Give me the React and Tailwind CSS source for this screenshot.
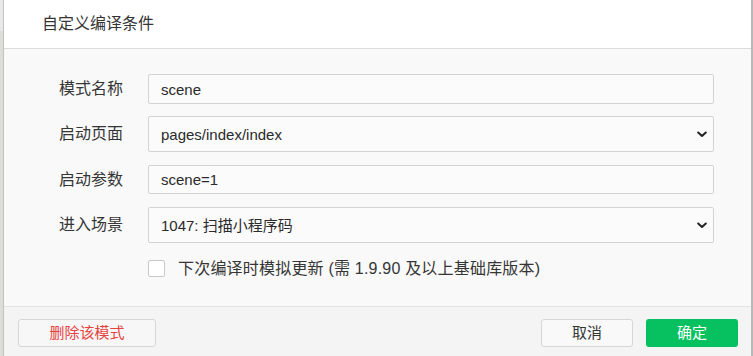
import React from "react";

const font = { fontFamily: '"Liberation Sans", "Noto Sans CJK SC", sans-serif' };

function Chevron() {
  return (
    <svg width="10" height="7" viewBox="0 0 10 7" className="shrink-0">
      <path d="M1.2 1.5 L5 5 L8.8 1.5" fill="none" stroke="#222" strokeWidth="2" strokeLinecap="round" strokeLinejoin="round" />
    </svg>
  );
}

function Row({ label, value, select, h, mt }) {
  return (
    <div className={`flex items-center ${mt}`}>
      <div className="w-[119px] shrink-0 text-right text-[16px] text-[#353535] leading-none">{label}</div>
      <div
        className={`ml-[25px] w-[566px] ${h} flex items-center justify-between rounded-[2px] border border-[#d3d3d3] bg-[#fbfbfb] pl-[12px] pr-[6px] text-[15px] text-[#2a2a2a]`}
      >
        <span className="leading-none">{value}</span>
        {select && <Chevron />}
      </div>
    </div>
  );
}

export default function App() {
  return (
    <div className="flex h-[356px] w-[753px] overflow-hidden" style={font}>
      {/* window edge */}
      <div className="flex w-[3px] shrink-0 flex-col">
        <div className="h-[31px] bg-[#e9e9e9]" />
        <div className="flex-1 bg-[#dcdcd8]" />
      </div>
      <div className="flex flex-1 flex-col border-l border-r-2 border-l-[#c2c2c2] border-r-[#b8b8b8] bg-white">
        <div className="flex h-[49px] shrink-0 items-center border-b border-[#dcdcdc] bg-white pl-[38px] pb-[1px]">
          <span className="text-[16px] text-[#353535]">自定义编译条件</span>
        </div>

        <div className="flex h-[257px] shrink-0 flex-col bg-[#f9f9f9] pt-[25px]">
          <Row label="模式名称" value="scene" h="h-[30px]" mt="" />
          <Row label="启动页面" value="pages/index/index" select h="h-[36px]" mt="mt-[12px]" />
          <Row label="启动参数" value="scene=1" h="h-[29px]" mt="mt-[13px]" />
          <Row label="进入场景" value="1047: 扫描小程序码" select h="h-[36px]" mt="mt-[13px]" />
          <div className="mt-[17px] flex items-center pl-[144px]">
            <div className="h-[17px] w-[17px] rounded-[2px] border border-[#c9c9c9] bg-white" />
            <span className="ml-[13px] text-[16px] leading-none text-[#353535] tracking-[0.2px]">
              下次编译时模拟更新 (需 1.9.90 及以上基础库版本)
            </span>
          </div>
        </div>

        <div className="flex flex-1 items-start justify-between border-t border-[#e2e2e2] bg-[#f4f4f4] pl-[14px] pr-[13px] pt-[12px]">
          <button className="flex h-[28px] w-[138px] items-center justify-center rounded-[3px] border border-[#d6d6d6] bg-[#f7f7f7] text-[15px] text-[#e64340]">
            删除该模式
          </button>
          <div className="flex gap-[13px]">
            <button className="flex h-[28px] w-[92px] items-center justify-center rounded-[3px] border border-[#d6d6d6] bg-[#f9f9f9] text-[15px] text-[#353535]">
              取消
            </button>
            <button className="flex h-[28px] w-[92px] items-center justify-center rounded-[3px] bg-[#07c160] text-[15px] text-white">
              确定
            </button>
          </div>
        </div>
      </div>
    </div>
  );
}
